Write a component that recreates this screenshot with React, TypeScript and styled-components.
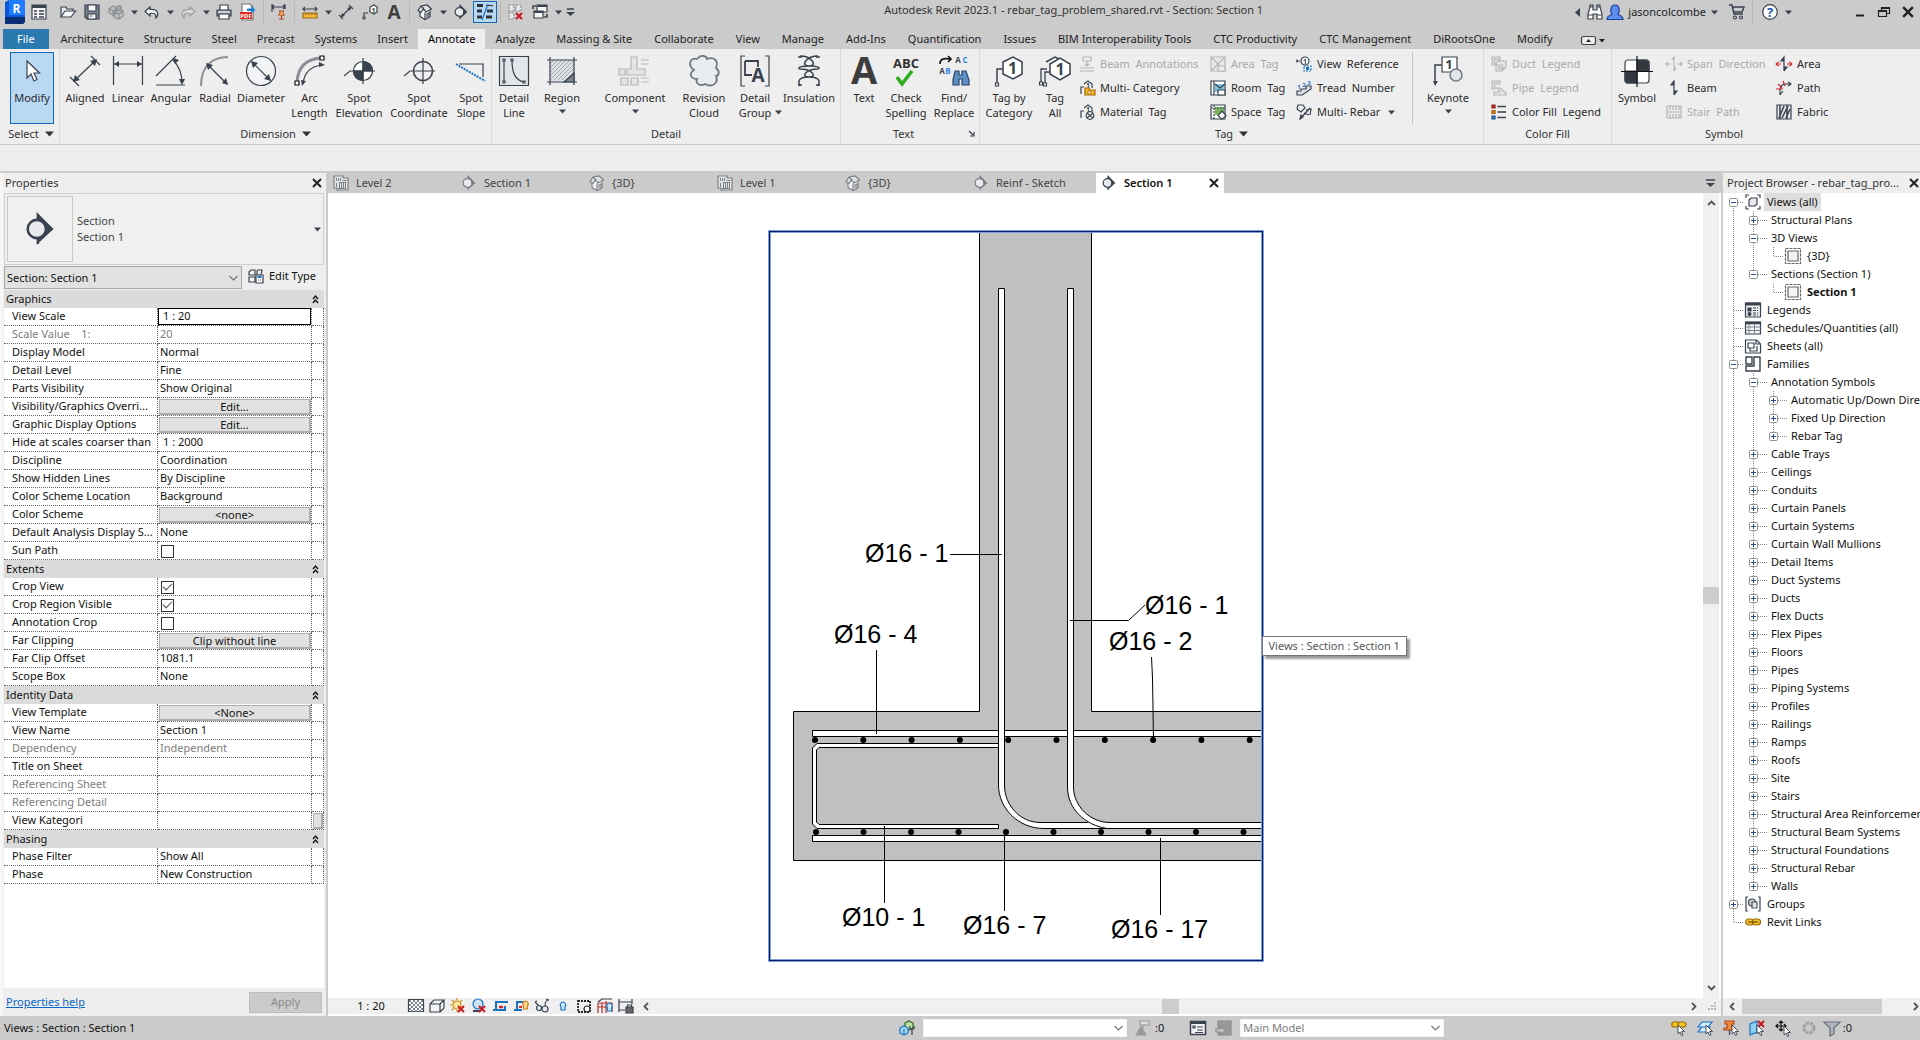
import React from "react";
import styled, { createGlobalStyle, css } from "styled-components";

const ink = "#39424e";
const mute = "#b4b6b8";
const blue = "#1a74c4";
const chrome = "#cbcbcb";
const panel = "#eeeeee";

const Global = createGlobalStyle`
  *, *::before, *::after { box-sizing: border-box; }
  html, body, #root { height: 100%; }
  body {
    margin: 0;
    overflow: hidden;
    background: ${panel};
    color: #1e1e1e;
    font: 11px/16px "Noto Sans", "Open Sans", sans-serif;
  }
  button, input, select { font: inherit; color: inherit; }
  svg { overflow: visible; flex: none; }
`;

/* ---------- icons ---------- */

type GProps = { w?: number; h?: number; vw?: number; vh?: number; color?: string; children: React.ReactNode };
const G = ({ w = 16, h = 16, vw, vh, color = ink, children }: GProps) => (
  <svg width={w} height={h} viewBox={`0 0 ${vw ?? w} ${vh ?? h}`} fill="none" stroke={color} strokeWidth={1.2} aria-hidden="true">
    {children}
  </svg>
);

const T = ({ x, y, s, c = ink, children }: { x: number; y: number; s: number; c?: string; children: string }) => (
  <text x={x} y={y} fontSize={s} fontWeight={700} fontFamily="Open Sans, sans-serif" fill={c} stroke="none" textAnchor="middle">{children}</text>
);

const Caret = () => <G w={7} h={5}><path d="M0 .5h7L3.500 4.500z" fill={ink} stroke="none" /></G>;
const BigCaret = () => <G w={9} h={6}><path d="M0 .5h9L4.500 5.500z" fill="#333" stroke="none" /></G>;
const Cross = ({ s = 10 }: { s?: number }) => <G w={s} h={s} vw={10} vh={10} color="#222"><path d="M1 1l8 8M9 1L1 9" strokeWidth={2} /></G>;
const Chevron = ({ turn, c = "#555" }: { turn: number; c?: string }) => (
  <G w={9} h={9} color={c}><path d="M1 3l3.500 3.500L8 3" strokeWidth={1.8} transform={`rotate(${turn} 4.500 4.500)`} /></G>
);
const Thin = () => <G w={9} h={6} color="#777"><path d="M.5 1l4 4 4-4" /></G>;

const cursor = (x: number, y: number) => (
  <path d={`M${x} ${y}v9l2-2 1.500 3.500 1.500-.7-1.500-3.300h3z`} fill="#fff" stroke={ink} strokeWidth={0.9} />
);
const redX = (x: number, y: number) => <path d={`M${x} ${y}l6 6m0-6l-6 6`} stroke="#c8191e" strokeWidth={2} />;

const House = ({ c = ink }: { c?: string }) => (
  <G color={c}>
    <path d="M3 7.500v5l5 3 5-2.500V6.500" fill="#f4f5f6" />
    <path d="M1 6.500L4 2l6-1 4.500 4-5.500 3-2.500-3.500L4 8.500z" fill="#dfe2e5" />
    <path d="M8 8.500v7M10 13.500v-3.500l2-1v4M4 2l2.500 2.500" />
  </G>
);
const SectionIcon = ({ c = ink, s = 16 }: { c?: string; s?: number }) => (
  <G w={s} h={s} vw={16} vh={16} color={c}><path d="M7 1v14M7 1.500L13.500 8 7 14z" fill={c} /><circle cx={6.500} cy={8} r={4.300} fill="#e8eaee" /></G>
);
const PlanIcon = ({ c = ink }: { c?: string }) => (
  <G color={c}><path d="M1 1h9v2h5v12H4v-2H1z" fill="#e4e5e7" /><path d="M3.500 3v3M5.500 3v3M7.500 3v3M3.500 8v4M6 7.500h7M6.500 8v5M8.500 8v5M10.500 8v5M12.500 8v5M5 13.500h8M9.500 5.500h4" strokeWidth={1} /></G>
);
const Binoculars = () => (
  <G><path d="M3 3h3v3h4V3h3l2 7v5h-5v-5H6v5H1v-5z" fill="#fff" /><path d="M3 3V1h3v2M10 3V1h3v2M1 11h5M10 11h5" /></G>
);

const DimIcon = <G><path d="M3 13L13 3M1 11l4 4M11 1l4 4" /><path d="M3 13l1-4 3 3zM13 3l-1 4-3-3z" fill={ink} stroke="none" /></G>;

const quick: Record<string, React.ReactNode> = {
  revit: <G w={20} h={24}><path d="M0 2l4-2h16v22l-2 2H0z" fill="#0a57d8" stroke="none" /><path d="M4 0h16v15H4z" fill="#1f7cff" stroke="none" /><path d="M0 17h20v5l-2 2H0z" fill="#0b2f77" stroke="none" /><T x={11.500} y={13} s={12} c="#fff">R</T></G>,
  props: <G><path d="M1 1h14v14H1z" fill="#f4f4f4" /><path d="M1 2.500h14" strokeWidth={3} /><path d="M3 7h3M3 10h3M3 13h3M8 7h5M8 10h5M8 13h5" strokeWidth={1.600} /></G>,
  open: <G><path d="M1 13V3h5l1 2h6v2" fill="#e4e7ea" /><path d="M1 13l4-6h10.500L11 13z" fill="#f6f7f8" /></G>,
  save: <G><path d="M1 1h14v14H3l-2-2z" fill="#7b8591" /><path d="M4 1h8v6H4zM4 10h8v5H4z" fill="#f4f4f4" /><path d="M6 12h2" /></G>,
  sync: <G color="#8b8f94"><path d="M1 5l4-3 4 2v5l-4 2-4-2zM6 8l4-3 5 2v5l-4 3-5-2z" fill="#bfc2c5" /><path d="M1 5l4 2v4M5 7l4-3M6 8l5 2v5M11 10l4-3" /><circle cx={11} cy={4} r={2.500} fill="#aaa" /></G>,
  undo: <G><path d="M6 3L1 7.500 6 12V9.500c5-1 7 1 5.500 5 4.500-5 2-9.500-5.500-9z" fill="#f7f7f7" /></G>,
  redo: <G color="#9b9ea2"><path d="M10 3l5 4.500-5 4.500V9.500c-5-1-7 1-5.500 5-4.500-5-2-9.500 5.500-9z" fill="#d8d8d8" /></G>,
  print: <G><path d="M4 6V1h8v5" fill="#fff" /><path d="M1 6h14v6H1z" fill="#8a929b" /><path d="M3 10h10v5H3z" fill="#fff" /><path d="M2 8h12" stroke="#fff" /></G>,
  pdf: <G><path d="M2 0h8l3 3v13H2z" fill="#fff" stroke="#777" /><path d="M0 8h12v7H0z" fill="#e02b20" stroke="none" /><T x={6} y={14} s={6} c="#fff">PDF</T><path d="M7 4.500h4V2l4.500 4L11 9.500V7H7z" fill="#1b82d8" stroke="none" /></G>,
  pin: <G><path d="M1 0v8M14 0v5M1 3h13M3 1L1 3l2 2M12 1l2 2-2 2" /><path d="M8 7h5M9 7v4M12 7v4M7 11h7M10.500 11v4M8 15h5" stroke="#b3441a" /><path d="M9 8h3v3H9z" fill="#f0a040" stroke="none" /></G>,
  measure: <G><path d="M1 5h14M3 3L1 5l2 2M13 3l2 2-2 2" /><path d="M1 9h14v5H1z" fill="#f2b63a" stroke="#9b6a12" /><path d="M4 9v2M7 9v2M10 9v2M13 9v2" stroke="#9b6a12" /></G>,
  align: DimIcon,
  tag: <G><path d="M2 14V9h4" /><path d="M8 3l4-2 3 2v5l-3 2-4-2z" fill="#fff" /><circle cx={2} cy={14} r={1.200} fill="#fff" /><T x={11.500} y={8.500} s={7}>1</T></G>,
  text: <G w={18} h={18}><T x={9} y={16} s={19} c="#3d3d3d">A</T></G>,
  house: <House />,
  section: <SectionIcon />,
  thin: <G w={18} h={18}><path d="M1 2.500h6M1 8h5M1 14h5M11 8h6M10 14h6" strokeWidth={3} stroke="#2b3440" /><path d="M10 2.500h7" /><path d="M12 1L6 17" stroke={blue} /></G>,
  closeh: <G><path d="M1 1h5v6H1zM8 1h5v6H8zM1 9h5v6H1z" fill="#e8e8e8" stroke="#8a8f96" strokeDasharray="2 1" />{redX(8, 9)}</G>,
  switchw: <G><path d="M5 1h10v7H5zM2 7h9v7H2z" fill="#f4f4f4" /><path d="M5 2h10M2 8h9" strokeWidth={2} /><path d="M1 5V2h3M15 10v3h-3" stroke="#111" /></G>,
};

const big: Record<string, React.ReactNode> = {
  modify: <G w={16} h={24}><path d="M3 2v17l4-4 3 7 3-1.500-3-6.500h5.500z" fill="#fff" /></G>,
  aligned: <G w={32} h={32}><path d="M5 26L26 6M1 22l9 9M22 1l9 9" /><path d="M4 27l2-7 5 5zM28 4l-2 7-5-5z" fill={ink} stroke="none" /></G>,
  linear: <G w={32} h={32}><path d="M1.500 1v29M30.500 1v29M2 9h28" /><path d="M2 9l5-3v6zM30 9l-5-3v6z" fill={ink} stroke="none" /></G>,
  angular: <G w={32} h={32}><path d="M1 30h29M1 21L21 1M18 5c6 6 9 13 9 23" /><path d="M18 3l6 2-4 4zM27 30l-3-6h6z" fill={ink} stroke="none" /></G>,
  radial: <G w={32} h={32}><path d="M2 31C2 12 12 2 29 2" stroke="#8a8f96" strokeWidth={2} /><path d="M8 9l20 20" /><path d="M7 8l7 2-5 5zM29 30l-6-2 4-5z" fill={ink} stroke="none" /></G>,
  diameter: <G w={32} h={32}><circle cx={16} cy={16} r={14.500} fill="#f3f4f5" /><path d="M7 7l18 18" /><path d="M6 6l7 2-5 5zM26 26l-7-2 5-5z" fill={ink} stroke="none" /></G>,
  arc: <G w={32} h={32}><path d="M3 27C4 12 12 4 27 3" stroke="#8a8f96" strokeWidth={3} /><path d="M9 29C10 18 17 11 29 10" /><path d="M8 31l-1-6 5 1zM31 10l-6-3v5z" fill={ink} stroke="none" /><path d="M1 26h4v4H1zM26 1h4v4h-4z" fill="#fff" stroke="#111" /></G>,
  elevation: <G w={32} h={32}><circle cx={20} cy={16} r={9.500} fill="#fff" /><path d="M20 6.500A9.500 9.500 0 0 1 29.500 16H20zM20 25.500A9.500 9.500 0 0 1 10.500 16H20z" fill={ink} /><path d="M20 3v26M1 21l6-5h25" /></G>,
  coordinate: <G w={32} h={32}><circle cx={20} cy={16} r={9.500} strokeWidth={1.600} /><path d="M20 3v26M1 21l6-5h25" /></G>,
  slope: <G w={32} h={32}><path d="M4 9h24v13" /><path d="M1 9l29 17" stroke={blue} strokeWidth={2} strokeDasharray="2 1" /></G>,
  detailline: <G w={32} h={32}><path d="M1.500 1.500h29v29h-29z" fill="#e2e5e9" /><path d="M6 5v22M14 5c0 13 3 20 12 22" /><path d="M5 4h2v2H5zM13 4h2v2h-2zM5 26h2v2H5zM25 26h2v2h-2z" fill="#fff" /></G>,
  region: <G w={32} h={32}><path d="M4 5h24v22H4z" fill="#dfe1e4" stroke="none" /><path d="M4 9l4-4M4 13l8-8M4 17L16 5M4 21L20 5M4 25L24 5M8 25L28 5M12 25L28 9M16 25l12-12M20 25l8-8M24 25l4-4" stroke="#9a9fa6" strokeWidth={0.900} /><path d="M1 5h30M4 2v28M28 2v28M1 27h30" /><path d="M18 27l10-9v9z" fill="#7b838e" /></G>,
  component: <G w={36} h={32} color={mute}><path d="M14 2h6v12h8v6H10v-6h4z" fill="#e4e4e4" /><path d="M2 14h6v6H2zM4 23h7v7H4zM14 23h7v7h-7zM24 23h8M24 27h8M24 5h8M24 9h8" fill="#e4e4e4" /></G>,
  cloud: <G w={32} h={32}><path d="M6 15C0 11 1 2 9 4c4-5 10-3 10 0 7-3 12 2 9 9 5 4 2 8 0 8 3 7-4 12-11 8-5 3-10-1-8-5-7 0-8-6-3-9z" fill="#e9ecef" stroke="#717983" strokeWidth={1.800} /></G>,
  group: <G w={32} h={32}><path d="M6 1H2v30h4M26 1h4v30h-4" /><path d="M6 6h13v6M6 6v14h7" strokeWidth={1.800} /><T x={19} y={27} s={19} c="#39424e">A</T></G>,
  insulation: <G w={26} h={32}><path d="M4 1c12 0 18 10 9 10S1 13 4 14c12 0 18 8 9 8S1 25 4 31M22 1C10 1 4 11 13 11s12 2 9 3C10 14 4 22 13 22s12 3 9 9M2 2h4M20 2h4M2 30h4M20 30h4" strokeWidth={1.500} /></G>,
  text: <G w={28} h={32}><T x={14} y={29} s={38} c="#3d3d3d">A</T></G>,
  spelling: <G w={30} h={32}><T x={15} y={13} s={13} c="#333">ABC</T><path d="M6 22l5 7L21 16" stroke="#2fae1e" strokeWidth={3.500} /></G>,
  find: <G w={32} h={32}><path d="M2 9c0-5 3-6 10-5M10 1l3 3-3 3" stroke="#111" strokeWidth={1.600} /><T x={20} y={8} s={8}>A</T><T x={27} y={8} s={8} c="#2e86de">C</T><T x={4} y={19} s={8}>A</T><T x={10} y={19} s={8} c="#2e86de">B</T><path d="M17 16h4v4h3v-4h4l3 9v5h-7v-6h-3v6h-6v-5z" fill="#5f8fc0" stroke="#24466b" /></G>,
  tagby: <G w={32} h={32}><path d="M4 29V14h6" strokeWidth={1.500} /><path d="M10 7l10-5 9 5v12l-9 5-10-5z" fill="#fff" strokeWidth={1.500} /><path d="M2.500 28h3v3h-3z" fill="#fff" /><T x={19.500} y={19} s={16}>1</T></G>,
  tagall: <G w={34} h={32}><path d="M3 29V14h6M7 29V17h5" strokeWidth={1.300} /><path d="M8 7l9-5 4 2M12 9l10-6 10 6v10l-10 6-10-6z" fill="#fff" strokeWidth={1.500} /><path d="M1.500 27h3v3h-3zM5.500 28h3v3h-3z" fill="#fff" /><T x={22} y={20} s={16}>1</T></G>,
  keynote: <G w={30} h={32}><path d="M2 28V10h7" strokeWidth={1.500} /><path d="M9 2h15v15H9z" fill="#fff" /><circle cx={23} cy={20} r={6} fill="#e2e5e9" stroke="#717983" strokeWidth={1.500} /><path d="M2 31l-2-5h5z" fill={ink} stroke="none" /><T x={16} y={14} s={13}>1</T></G>,
  symbol: <G w={32} h={32}><rect x={4} y={5} width={24} height={23} rx={3} fill="#fff" /><path d="M16 5h9q3 0 3 3v8H16zM16 28H7q-3 0-3-3v-9h12z" fill="#33393f" /><path d="M16 1v31M0 16.500h32" stroke="#111" /></G>,
};

const small: Record<string, React.ReactNode> = {
  beamann: <G color={mute}><path d="M4 1h8v4H4zM8 5v5M6 8l2 2 2-2M1 12h14M1 15h14" /></G>,
  multicat: <G><path d="M2 14V7h3" /><path d="M5 4l4-3 4 3v4" fill="#fff" /><T x={9} y={8} s={7}>1</T><path d="M6 8h4l1 2h5v5H6z" fill="#f5b731" stroke="#a46a00" /><path d="M9 11h3v3H9z" fill="#fff0b0" stroke="#a46a00" strokeWidth={0.800} /></G>,
  material: <G><path d="M2 14V7h3" /><path d="M5 4l4-3 4 3v4" fill="#fff" /><T x={9} y={8} s={7}>1</T><circle cx={11} cy={11.500} r={3.800} fill="#fff" /><path d="M8 9l6 5M14 9l-6 5" /></G>,
  areatag: <G color={mute}><path d="M1 1h14v14H1zM1 1l14 14M15 1L1 15" fill="#e8e8e8" /><path d="M8 10h7v5H8z" fill="#eee" /></G>,
  roomtag: <G><path d="M1 1h14v14H1zM4 1v14" fill="#fff" /><path d="M5 4h9v8H5z" fill="#7fc0e0" stroke="none" /><path d="M5 4l5 4 5-4" /><path d="M8 10h7v5H8z" fill="#fff" /></G>,
  spacetag: <G><path d="M1 1h14v14H1z" fill="#fff" /><path d="M5 3h9v8H5z" fill="#7cb860" stroke="none" /><path d="M4 1v14M1 4h14" strokeDasharray="2 1" /><path d="M12 7l4 4.500-4 4-4-4z" fill="#fff" /></G>,
  viewref: <G><circle cx={9} cy={5} r={4} fill="#fff" /><path d="M0 5h4M1 3.500v3" /><T x={9} y={8} s={7}>1</T><path d="M8 10h7v5H8z" stroke={blue} strokeDasharray="2 1" /><path d="M10 11h3v3h-3z" fill={blue} stroke="none" /></G>,
  tread: <G><path d="M1 11h4V9h5V6h5v3l-9 6H1z" fill="#dfe3e6" /><T x={3} y={9} s={6} c={blue}>1</T><T x={8} y={7} s={6} c={blue}>2</T><T x={13} y={5} s={6} c={blue}>3</T></G>,
  multirebar: <G><path d="M2 1h5l2 3-4 4-4-3zM4 15L14 4M8 9l5 2M10 6l5-1-1 6" fill="none" /><path d="M4 15l1-4 2 2z" fill={ink} /></G>,
  duct: <G color={mute}><path d="M1 1h3v3H1zM6 1h3v3H6zM1 6h3v3H1zM5 7l3-2h7v6l-4 4H5zM5 9h7M8 11h4v2H8z" fill="#e6e6e6" /></G>,
  pipe: <G color={mute}><path d="M1 1h3v3H1zM6 1h3v3H6zM1 6h3v3H1zM6 8h3l6 5v2H3v-3h6z" fill="#e6e6e6" /></G>,
  colorfill: <G><path d="M6.500 2.500H15M6.500 8H15M6.500 13.500H15" strokeWidth={1.500} /><path d="M1 1h3v3H1z" fill="#d22" stroke="#822" /><path d="M1 6.500h3v3H1z" fill="#f28c1e" stroke="#a55a00" /><path d="M1 12h3v3H1z" fill="#3c8ed8" stroke="#14508c" /></G>,
  span: <G color={mute}><path d="M8 1v14M6 4l2-3v14l2-4M0 8h5M11 8h5M2 6L0 8l2 2M14 6l2 2-2 2" /></G>,
  beam: <G><path d="M8 15V1L5 5h3M8 15l3-4H8" fill={ink} /></G>,
  stair: <G color={mute}><path d="M1 2h14v12H1zM1 8h14M4 2v4M7 2v4M10 2v4M13 2v4M4 10v4M7 10v4M10 10v4M13 10v4" /></G>,
  area: <G><path d="M8 15V1L5 5h3M8 15l3-4H8" fill={ink} /><path d="M0 8h5M11 8h5M3 6q-6 2 0 4M13 6q6 2 0 4" stroke="#d8202a" /></G>,
  path: <G><path d="M4 15V9q1-5 6-5h4M12 2l3 2-3 2M4 15l3-4" /><path d="M0 9h7M7 1l2 5M2 4l4 4" stroke="#d8202a" /></G>,
  fabric: <G><path d="M1 1h14v14H1z" fill="#e3e6e9" /><path d="M4 1v14M11 1v14M3 14L8 2M6 14l6-12M10 14l4-9" strokeWidth={1.500} /></G>,
};

const treeIcons: Record<string, React.ReactNode> = {
  views: <G><path d="M1 4V1h3M12 1h3v3M15 12v3h-3M4 15H1v-3" /><path d="M4 6l2-2h6v6l-2 2H4z" fill="#e8e8ee" /></G>,
  sheetview: <G color="#666"><path d="M.5.5h15v15H.500z" strokeDasharray="3 1" /><path d="M3 3h10v10H3z" fill="#f3f3f3" /></G>,
  legends: <G><path d="M.5 1h15v14H.5z" fill="#eef0f2" /><path d="M.5 2h15" strokeWidth={3} /><path d="M3 6h3v3H3z" fill={ink} /><circle cx={4.500} cy={12} r={1.500} fill={ink} /><path d="M8 6h5M8 8.500h5M8 11h5M8 13h5" strokeDasharray="3 1" /></G>,
  schedules: <G><path d="M.5 2h15v12H.5z" fill="#f5f5f5" /><path d="M.5 3h15" strokeWidth={2.500} /><path d="M.5 7h15M.5 10.500h15M4 4v10M9.500 4v10" stroke="#7b838c" strokeWidth={1} /></G>,
  sheets: <G><path d="M.5 2h11l4 4v9H.500z" fill="#fff" /><path d="M3 5h6v5H3zM5 10v3h7V8M11 2v4h4" /></G>,
  families: <G><path d="M1 1h6v7H1zM9 1h6v14H1v-5h8z" fill="#fff" strokeWidth={1.400} /></G>,
  groups: <G><path d="M3 1H1v14h2M13 1h2v14h-2" /><circle cx={7} cy={6.500} r={3.500} fill="#d4d7da" /><path d="M7 6h5v6H7z" fill="#eceef0" opacity={0.900} /></G>,
  links: <G color="#9a6b00"><rect x={0.700} y={5} width={8} height={6} rx={3} fill="#f3c32f" /><rect x={7.500} y={5} width={8} height={6} rx={3} fill="#f3c32f" /><path d="M3 8h10" stroke="#6d4b00" /></G>,
};

const sun = <><circle cx={7} cy={7} r={4} fill="#ffe9a0" stroke="#c98a12" /><path d="M7 0v2M7 12v2M0 7h2M2 2l1.500 1.500M12 2l-1.500 1.500M2 12l1.500-1.500" stroke="#c98a12" /></>;
const bulb = (x: number, y: number, f: string, s: string) => <path d={`M${x} ${y}a3 3 0 0 1 2 5v3h-4v-3a3 3 0 0 1 2-5z`} fill={f} stroke={s} />;

const checks = Array.from({ length: 7 * 6 }, (_, i) => i).filter((i) => ((i % 7) + Math.floor(i / 7)) % 2 === 0);

const viewIcons: [string, React.ReactNode][] = [
  ["Detail Level", <G><path d="M.5 1.500h15v12H.500z" fill="#fff" />{checks.map((i) => <rect key={i} x={1 + (i % 7) * 2} y={2 + Math.floor(i / 7) * 2} width={2} height={2} fill="#7a828b" stroke="none" />)}</G>],
  ["Visual Style", <G><path d="M1 6h10v8H1zM1 6l4-4h10L11 6M15 2v8l-4 4" fill="#f4f4f4" /></G>],
  ["Sun Path", <G>{sun}{redX(8, 8)}</G>],
  ["Shadows", <G><circle cx={7} cy={6} r={5} fill="#c9e4f6" stroke={blue} /><path d="M2 13h7" strokeWidth={2} />{redX(8, 8)}</G>],
  ["Crop View", <G><path d="M4 13V4h12M1 12h12V8" stroke={blue} strokeWidth={2} /><path d="M7 9h4" stroke="#d22" strokeWidth={2.500} /></G>],
  ["Show Crop Region", <G><path d="M4 13V4h8M1 12h8" stroke={blue} strokeWidth={2} /><path d="M6 9h3" stroke="#d22" strokeWidth={2} />{bulb(12.500, 3, "#ffd98a", "#d07c14")}</G>],
  ["Temporary Hide/Isolate", <G><path d="M1 4l4 4M15 2q-4 0-4 6M7 10l2 1M1 4l2-1M12 1l3 1" /><circle cx={5} cy={10} r={2.500} fill="#e6eef4" /><circle cx={11} cy={11} r={3} fill="#e6eef4" /></G>],
  ["Reveal Hidden Elements", <G>{bulb(8, 4, "#cfe9fb", blue)}</G>],
  ["Temporary View Properties", <G><path d="M2 3h12v11H2z" strokeDasharray="2 1" strokeWidth={1.800} stroke="#222" /><circle cx={11} cy={11} r={3} fill="#fff" stroke="#222" /></G>],
  ["Analytical Model", <G><path d="M1 5h14v9M1 5v10M5 5v10M9 3v12M1 9h12" stroke="#b03030" /><path d="M1 4l4-3h10" />{bulb(12.500, 5, "#cfe9fb", blue)}</G>],
  ["Reveal Constraints", <G><path d="M1 1v13M14 1v5M1 4h13" /><path d="M8 9h7v6H8z" fill="#666" /><path d="M9.500 9V7h4v2M1 12h6" /></G>],
];

const statusIcons: [string, React.ReactNode][] = [
  ["Select links", <G><rect x={0.700} y={2} width={8} height={5} rx={2.500} fill="#f3c32f" stroke="#9a6b00" /><rect x={7} y={2} width={8} height={5} rx={2.500} fill="#f3c32f" stroke="#9a6b00" />{cursor(7, 5)}</G>],
  ["Select underlay elements", <G><path d="M5 2h10l-4 5H1zM5 7h8l-2 5H1z" fill="#d5eafb" stroke={blue} />{cursor(9, 5)}</G>],
  ["Select pinned elements", <G><path d="M2 1h9v3H9v4h3v2H1V8h3V4H2z" fill="#f08a3c" stroke="#b3441a" /><path d="M6.500 10v5" />{cursor(9, 5)}</G>],
  ["Select elements by face", <G><path d="M1 4l7-3v11l-7 3z" fill="#8fd0f2" stroke={blue} />{redX(9, 1)}{cursor(8, 5)}</G>],
  ["Drag elements on selection", <G><path d="M6 1v10M1 6h10M4 3l2-2 2 2M4 9l2 2 2-2M3 4L1 6l2 2M9 4l2 2-2 2" stroke="#111" />{cursor(9, 6)}</G>],
  ["Background processes", <G><circle cx={8} cy={8} r={5} stroke="#a0a0a0" strokeWidth={3} strokeDasharray="3 1" /></G>],
];

/* ---------- shared parts ---------- */

const row = css`display: flex; align-items: center;`;
const bare = css`
  ${row}
  justify-content: center;
  padding: 0;
  border: 0;
  background: none;
  flex: none;
`;
const Shell = styled.div`display: flex; flex-direction: column; height: 100vh; min-width: 0;`;
const IconButton = styled.button<{ $w?: number; $on?: boolean }>`
  ${bare}
  width: ${(p) => p.$w ?? 24}px;
  height: 22px;
  ${(p) => p.$on && css`background: #b7d7f3; border: 1px solid #1468b8;`}
`;
const Spacer = styled.span<{ $w: number }>`flex: none; width: ${(p) => p.$w}px;`;
const Divider = styled.span`
  flex: none; align-self: stretch; width: 7px;
  background: linear-gradient(#b9b9b9, #b9b9b9) center / 1px 100% no-repeat;
`;

/* ---------- title bar ---------- */

const TitleBar = styled.header`
  display: flex; height: 29px; padding: 1px 0 6px 3px; background: ${chrome}; flex: none;
`;
const Tools = styled.div`${row} flex: none;`;
const Title = styled.h1`
  flex: 1; margin: 0; text-align: center; white-space: nowrap; overflow: hidden;
  font-size: 11px; font-weight: 400; line-height: 18px; color: #333;
`;
const User = styled.button`${bare} gap: 5px; height: 22px; color: #222;`;

const quickItems: (string | number)[] = [
  "revit", "props", 5, "open", "save", "sync", "v", "undo", "v", "redo", "v", "print", "pdf", "|", "pin", "|",
  "measure", "v", "align", "tag", "text", "|", "house", "v", "section", "thin", "|", "closeh", "switchw", "v",
];

/* ---------- ribbon ---------- */

const Tabs = styled.nav`display: flex; height: 20px; padding-left: 3px; background: ${chrome}; flex: none;`;
const Tab = styled.button<{ $kind?: "file" | "active" | "wide" }>`
  border: 0; padding: 0 10px; height: 20px; line-height: 20px; white-space: nowrap; background: none; color: #222; flex: none;
  ${(p) => p.$kind === "file" && css`background: #2a7ab0; color: #fff; padding: 0 14px; margin-right: 2px;`}
  ${(p) => p.$kind === "active" && css`background: ${panel}; color: #000;`}
  ${(p) => p.$kind === "wide" && css`padding: 0 11px;`}
`;
const coreTabs = ["Architecture", "Structure", "Steel", "Precast", "Systems", "Insert", "Annotate", "Analyze"];
const moreTabs = ["Massing & Site", "Collaborate", "View", "Manage", "Add-Ins", "Quantification", "Issues", "BIM Interoperability Tools", "CTC Productivity", "CTC Management", "DiRootsOne", "Modify"];

const Ribbon = styled.section`
  display: flex; height: 96px; padding: 0 0 0 3px; background: ${panel}; border-bottom: 1px solid ${chrome}; flex: none;
`;
const Group = styled.section<{ $w: number; $last?: boolean }>`
  display: flex; flex-direction: column; flex: none; width: ${(p) => p.$w}px; padding-top: 3px;
  border-right: ${(p) => (p.$last ? 0 : 1)}px solid #d9d9d9;
`;
const GroupBody = styled.div<{ $pad?: number }>`display: flex; height: 72px; padding-left: ${(p) => p.$pad ?? 0}px;`;
const GroupTitle = styled.h2`
  ${row} justify-content: center; gap: 6px; margin: 2px 0 0; height: 16px; font-size: 11px; font-weight: 400; color: #333;
`;
const Launcher = styled.button`${bare} margin-left: auto; width: 14px; height: 14px;`;
const BigButton = styled.button<{ $w: number; $on?: boolean }>`
  display: flex; flex-direction: column; align-items: center; flex: none;
  width: ${(p) => p.$w}px; height: 72px; padding: 3px 0 0; border: 0; background: none;
  line-height: 15px; white-space: nowrap; color: #2b2b2b;
  ${(p) => p.$on && css`background: #b9d8f4; border: 1px solid #1468b8; padding-top: 2px; margin-left: 7px;`}
`;
const BigArt = styled.span`${row} justify-content: center; height: 32px; margin-bottom: 3px;`;
const Beside = styled.span`${row} gap: 4px; margin-right: -11px;`;
const BelowCaret = styled.span`display: flex; padding-top: 4px;`;
const Stack = styled.div<{ $w: number }>`display: flex; flex-direction: column; flex: none; width: ${(p) => p.$w}px;`;
const SmallButton = styled.button<{ $off?: boolean }>`
  ${row} gap: 5px; height: 24px; padding: 0; border: 0; background: none; white-space: pre; color: ${(p) => (p.$off ? "#a9a9a9" : "#2b2b2b")};
`;
const Rule = styled.span`width: 1px; height: 72px; background: #c4c4c4; margin-left: auto;`;
const OptionsBar = styled.div`height: 28px; background: ${panel}; border-bottom: 2px solid ${chrome}; flex: none;`;

type B = [string, string, number, ("menu" | "beside")?];
const Big = ({ items }: { items: B[] }) => (
  <>
    {items.map(([icon, label, w, mode]) => {
      const lines = label.split("|");
      return (
        <BigButton key={label} $w={w} type="button">
          <BigArt>{big[icon]}</BigArt>
          {mode === "beside" ? (
            <><span>{lines[0]}</span><Beside><span>{lines[1]}</span><Caret /></Beside></>
          ) : (
            lines.map((l) => <span key={l}>{l}</span>)
          )}
          {mode === "menu" && <BelowCaret><Caret /></BelowCaret>}
        </BigButton>
      );
    })}
  </>
);

type S = [string, string, ("off" | "menu")?];
const Smalls = ({ w, items }: { w: number; items: S[] }) => (
  <Stack $w={w}>
    {items.map(([icon, label, mode]) => (
      <SmallButton key={label} type="button" $off={mode === "off"} disabled={mode === "off"}>
        {small[icon]}<span>{label}</span>{mode === "menu" && <Caret />}
      </SmallButton>
    ))}
  </Stack>
);

/* ---------- workspace ---------- */

const Work = styled.main`
  flex: 1; min-height: 0; display: grid; grid-template-columns: 323px minmax(0, 1fr) 197px;
  border-left: 3px solid #f6f6f6; background: ${panel};
`;
const Panel = styled.section`display: flex; flex-direction: column; min-width: 0; min-height: 0; background: ${panel};`;
const PanelHead = styled.div<{ $pad?: number }>`
  ${row} justify-content: space-between; height: 20px; padding: 0 0 0 ${(p) => p.$pad ?? 2}px; flex: none;
`;
const PanelName = styled.h2`margin: 0; font-size: 11px; font-weight: 400; color: #333; white-space: nowrap;`;
const Close = styled.button<{ $w?: number }>`${bare} width: ${(p) => p.$w ?? 18}px; height: 18px;`;

const TypeCard = styled.div`
  ${row} height: 72px; margin: 0 2px 0 1px; padding: 2px; border: 1px solid #d0d0d0; background: #f0f0f0; flex: none;
`;
const Preview = styled.div`${row} justify-content: center; width: 66px; height: 66px; border: 1px solid #c8c8c8;`;
const TypeName = styled.div`flex: 1; padding-left: 4px; color: #444;`;
const TypeRow = styled.div`${row} height: 25px; padding: 1px 0 1px 1px; flex: none;`;
const Combo = styled.span<{ $w: number; $h: number; $plain?: boolean }>`
  display: grid; grid-template-columns: 1fr 16px; align-items: center; width: ${(p) => p.$w}px; height: ${(p) => p.$h}px; flex: none;
  background: ${(p) => (p.$plain ? "#fff" : "#e1e1e1")}; border: 1px solid ${(p) => (p.$plain ? "#f4f4f4" : "#a8a8a8")};
  svg { pointer-events: none; grid-area: 1 / 2; justify-self: center; }
`;
const Select = styled.select<{ $dim?: boolean }>`
  grid-area: 1 / 1 / 2 / 3; appearance: none; border: 0; background: none; padding: 0 2px; height: 100%; color: ${(p) => (p.$dim ? "#7c7c7c" : "#111")};
`;
const EditType = styled.button`${bare} align-self: flex-start; height: 20px; gap: 5px; margin-left: 6px; color: #111; white-space: nowrap;`;

const Scroll = styled.div`flex: 1; min-height: 0; margin: 0 2px 0 1px; background: #fff; overflow: hidden;`;
const Table = styled.table`
  width: 100%; border-collapse: separate; border-spacing: 0; table-layout: fixed; color: #111;
  th, td { padding: 0; height: 18px; font-weight: 400; text-align: left; white-space: nowrap; overflow: hidden; }
`;
const NameCol = styled.col`width: 154px;`;
const EdgeCol = styled.col`width: 12px;`;
const SectionCell = styled.th`background: #dbdbdb;`;
const SectionBar = styled.div`${row} justify-content: space-between; height: 18px; padding: 0 5px 0 2px;`;
const Dot = css`border-bottom: 1px dotted #666; border-right: 1px dotted #666;`;
const NameCell = styled.th<{ $dim?: boolean }>`
  ${Dot} color: ${(p) => (p.$dim ? "#7d7d7d" : "#111")};
  label { display: block; height: 17px; line-height: 15px; padding-left: 8px; white-space: pre; }
`;
const ValueCell = styled.td`${Dot}`;
const ValueInput = styled.input<{ $focus?: boolean; $inset?: boolean }>`
  display: block; width: 100%; height: 17px; line-height: 15px; outline: 0; background: #fff;
  padding: 0 0 2px ${(p) => (p.$focus ? 4 : p.$inset ? 5 : 2)}px; border: ${(p) => (p.$focus ? "1px solid #000" : "0")};
  &:disabled { color: #7d7d7d; }
`;
const ValueButton = styled.button`
  display: block; width: calc(100% - 1px); height: 16px; line-height: 14px; margin: 1px 0 0 1px; padding: 0;
  background: #e1e1e1; border: 1px solid #adadad; border-bottom-width: 2px; border-right-width: 2px;
`;
const Check = styled.input`
  appearance: none; display: block; width: 13px; height: 13px; margin: 2px 0 0 3px; border: 1px solid #333; background: #fff;
  &:checked::after { content: ""; display: block; width: 9px; height: 5px; margin: 1px; border: solid #444; border-width: 0 0 1px 1px; transform: rotate(-45deg); }
`;
const Footer = styled.div`${row} justify-content: space-between; height: 28px; padding: 0 4px 0 3px; flex: none;`;
const Help = styled.a`color: #0a66c8; text-decoration: underline;`;
const Apply = styled.button`width: 73px; height: 21px; padding: 0; background: ${chrome}; border: 1px solid #bdbdbd; color: #8a8a8a;`;

type P = [string, string, ("input" | "focus" | "inset" | "dim" | "button" | "off" | "on" | "extra")];
const props: [string, P[]][] = [
  ["Graphics", [
    ["View Scale", "1 : 20", "focus"], ["Scale Value    1:", "20", "dim"], ["Display Model", "Normal", "input"], ["Detail Level", "Fine", "input"],
    ["Parts Visibility", "Show Original", "input"], ["Visibility/Graphics Overri...", "Edit...", "button"], ["Graphic Display Options", "Edit...", "button"],
    ["Hide at scales coarser than", "1 : 2000", "inset"], ["Discipline", "Coordination", "input"], ["Show Hidden Lines", "By Discipline", "input"],
    ["Color Scheme Location", "Background", "input"], ["Color Scheme", "<none>", "button"], ["Default Analysis Display S...", "None", "input"], ["Sun Path", "", "off"],
  ]],
  ["Extents", [
    ["Crop View", "", "on"], ["Crop Region Visible", "", "on"], ["Annotation Crop", "", "off"], ["Far Clipping", "Clip without line", "button"],
    ["Far Clip Offset", "1081.1", "input"], ["Scope Box", "None", "input"],
  ]],
  ["Identity Data", [
    ["View Template", "<None>", "button"], ["View Name", "Section 1", "input"], ["Dependency", "Independent", "dim"], ["Title on Sheet", "", "input"],
    ["Referencing Sheet", "", "dim"], ["Referencing Detail", "", "dim"], ["View Kategori", "", "extra"],
  ]],
  ["Phasing", [["Phase Filter", "Show All", "input"], ["Phase", "New Construction", "input"]]],
];

const Property = ({ p: [name, value, kind] }: { p: P }) => {
  const id = name.replace(/\W+/g, "-").toLowerCase();
  return (
    <tr>
      <NameCell scope="row" $dim={kind === "dim"}><label htmlFor={id}>{name}</label></NameCell>
      <ValueCell>
        {kind === "button" ? <ValueButton id={id} type="button">{value}</ValueButton>
          : kind === "on" || kind === "off" ? <Check id={id} type="checkbox" defaultChecked={kind === "on"} />
          : <ValueInput id={id} defaultValue={value} disabled={kind === "dim"} $focus={kind === "focus"} $inset={kind === "inset"} />}
      </ValueCell>
      <ValueCell>{kind === "extra" && <ValueButton type="button" aria-label="Browse" />}</ValueCell>
    </tr>
  );
};

/* ---------- document view ---------- */

const Doc = styled.section`
  display: flex; flex-direction: column; min-width: 0; min-height: 0; background: #fff;
  border-left: 2px solid ${chrome}; border-right: 2px solid ${chrome};
`;
const DocTabs = styled.div`display: flex; height: 20px; background: ${chrome}; flex: none;`;
const DocTab = styled.button<{ $on?: boolean }>`
  ${row} gap: 7px; flex: 0 0 128px; height: 20px; padding: 0 5px; border: 0; text-align: left; white-space: nowrap;
  background: ${(p) => (p.$on ? "#fff" : "none")}; color: ${(p) => (p.$on ? "#111" : "#444")}; font-weight: ${(p) => (p.$on ? 600 : 400)};
  svg:last-child:not(:first-child) { margin-left: auto; }
`;
const TabMenu = styled.button`${bare} margin-left: auto; width: 22px;`;
const DocBody = styled.div`flex: 1; min-height: 0; display: flex;`;
const Canvas = styled.div`flex: 1; min-width: 0; ${row} justify-content: center; overflow: hidden;`;
const Sheet = styled.figure`position: relative; margin: 0; display: flex;`;
const Tooltip = styled.figcaption`
  position: absolute; left: 495px; top: 407px; height: 20px; padding: 0 6px; line-height: 18px; white-space: nowrap; color: #575757;
  background: #fff; border: 1px solid #767676; box-shadow: 3px 3px 2px rgba(0, 0, 0, 0.4);
`;
const VBar = styled.div`
  display: flex; flex-direction: column; align-items: center; justify-content: space-between; width: 18px; padding: 6px 0;
  background: #f0f0f0; border-right: 2px solid #fff; flex: none;
`;
const VThumb = styled.span`width: 16px; height: 17px; background: #cdcdcd;`;
const ViewBar = styled.div`${row} height: 18px; background: #f0f0f0; border-bottom: 2px solid #fff; flex: none; padding-left: 1px;`;
const ScaleButton = styled.button`${bare} width: 76px; padding-left: 8px; color: #111;`;
const Track = styled.div`flex: 1; ${row} justify-content: center; height: 16px;`;
const HThumb = styled.span`width: 17px; height: 15px; background: #cdcdcd;`;

const tags: [number, number, string][] = [
  [865, 562, "Ø16 - 1"], [834, 643, "Ø16 - 4"], [1145, 614, "Ø16 - 1"], [1109, 650, "Ø16 - 2"],
  [842, 926, "Ø10 - 1"], [963, 934, "Ø16 - 7"], [1111, 938, "Ø16 - 17"],
];
const topDots = Array.from({ length: 10 }, (_, i) => 815 + i * 48.300);
const lowDots = Array.from({ length: 10 }, (_, i) => 816 + i * 47.500);

const Drawing = () => (
  <svg width="498" height="734" viewBox="767 229 498 734" role="img" aria-label="Section 1 reinforcement">
    <path d="M979.500 232V711.500H793.500V860.500H1263V711.500H1091.500V232z" fill="#c0c0c0" />
    <g fill="none" stroke="#000">
      <path d="M979.500 232V711.500H793.500V860.500H1263M1263 711.500H1091.500V232" />
      <g fill="#fff">
        <path d="M1263 730.500H812.500V736.500H1263M1263 835.500H812.500V841.500H1263" />
        <path d="M998.500 743.500H817L812.500 748V824L817 828.500H998.500V824.500H819L816.500 822V750L819 747.500H998.500" />
        <path d="M1263 828.500H1044C1018 828.500 998.500 808 998.500 785V288.500H1004.500V785C1004.500 806 1021 822.500 1040 822.500H1263" />
        <path d="M1263 828.500H1110C1086 828.500 1067.500 809 1067.500 787V288.500H1073.500V787C1073.500 806 1090 822.500 1110 822.500H1263" stroke="none" />
        <path d="M1107 828.500C1085 825 1067.500 809 1067.500 787V288.500H1073.500V787C1073.500 806 1090 822.500 1110 822.500H1263M1100 828.500H1263" fill="none" />
      </g>
      <path d="M950 554.500H1001.500M876.500 650V734M1070 620.500H1128.500L1145 605M1151.500 657L1152.500 678 1153.500 740M884.500 826V903M1004.500 832V911M1160.500 838V915" />
    </g>
    {topDots.map((x) => <circle key={x} cx={x} cy={740} r={3} />)}
    {lowDots.map((x) => <circle key={x} cx={x} cy={832} r={3} />)}
    <g fontFamily="Liberation Sans, Arial, sans-serif" fontSize={25} fill="#000">
      {tags.map(([x, y, t]) => <text key={t + x} x={x} y={y}>{t}</text>)}
    </g>
    <rect x={769.500} y={231.500} width={493} height={729} fill="none" stroke="#7f9fdc" strokeWidth={3} />
    <rect x={769.500} y={231.500} width={493} height={729} fill="none" stroke="#00206a" />
  </svg>
);

/* ---------- project browser ---------- */

const Tree = styled.ul`list-style: none; margin: 0; padding: 0; flex: 1; min-height: 0; overflow: hidden; background: #fff; color: #111;`;
const Item = styled.li`${row} height: 18px; white-space: nowrap;`;
const ItemText = styled.span<{ $gap?: boolean; $sel?: boolean; $bold?: boolean }>`
  line-height: 18px; margin-left: ${(p) => (p.$gap ? (p.$sel ? 3 : 6) : 0)}px;
  ${(p) => p.$sel && css`background: #dedede; padding: 0 3px;`}
  font-weight: ${(p) => (p.$bold ? 700 : 400)};
`;
const guide = (w: number, d: string, box?: "+" | "-") => (
  <svg width={w} height={18} viewBox={`0 0 ${w} 18`} fill="none" aria-hidden="true">
    <path d={d} stroke="#8a8a8a" strokeDasharray="1 1" />
    {box && <><rect x={6.500} y={5.500} width={8} height={8} rx={1} fill="#fff" stroke="#919191" /><path d={box === "+" ? "M8 9.500h5M10.500 7v5" : "M8 9.500h5"} stroke="#2b4a9b" /></>}
  </svg>
);
type N = { d: number; t: string; e?: "+" | "-"; icon?: string; bold?: boolean; sel?: boolean; end?: boolean; first?: boolean };
const kids = (end: string, s: string): N[] => s.split(",").map((t) => ({ d: 1, t, e: "+", end: t === end }));
const tree: N[] = [
  { d: 0, t: "Views (all)", e: "-", icon: "views", sel: true, first: true },
  { d: 1, t: "Structural Plans", e: "+" },
  { d: 1, t: "3D Views", e: "-" },
  { d: 2, t: "{3D}", icon: "sheetview", end: true },
  { d: 1, t: "Sections (Section 1)", e: "-", end: true },
  { d: 2, t: "Section 1", icon: "sheetview", bold: true, end: true },
  { d: 0, t: "Legends", icon: "legends" },
  { d: 0, t: "Schedules/Quantities (all)", icon: "schedules" },
  { d: 0, t: "Sheets (all)", icon: "sheets" },
  { d: 0, t: "Families", e: "-", icon: "families" },
  { d: 1, t: "Annotation Symbols", e: "-" },
  { d: 2, t: "Automatic Up/Down Direction", e: "+" },
  { d: 2, t: "Fixed Up Direction", e: "+" },
  { d: 2, t: "Rebar Tag", e: "+", end: true },
  ...kids("Walls", "Cable Trays,Ceilings,Conduits,Curtain Panels,Curtain Systems,Curtain Wall Mullions,Detail Items,Duct Systems,Ducts,Flex Ducts,Flex Pipes,Floors,Pipes,Piping Systems,Profiles,Railings,Ramps,Roofs,Site,Stairs,Structural Area Reinforcement,Structural Beam Systems,Structural Foundations,Structural Rebar,Walls"),
  { d: 0, t: "Groups", e: "+", icon: "groups" },
  { d: 0, t: "Revit Links", icon: "links", end: true },
];
const Node = ({ n, inLastSection }: { n: N; inLastSection: boolean }) => (
  <Item>
    {n.d > 0 && guide(20, "M10.500 0V18")}
    {n.d > 1 && guide(20, inLastSection ? "" : "M10.500 0V18")}
    {guide(n.icon ? 22 : 28, `M10.500 ${n.first ? 9 : 0}V${n.end ? 9 : 18}M11 9.500H${n.icon ? 21 : 25}`, n.e)}
    {n.icon && treeIcons[n.icon]}
    <ItemText $gap={!!n.icon} $sel={n.sel} $bold={n.bold}>{n.t}</ItemText>
  </Item>
);
const HScroll = styled.div`
  ${row} height: 17px; padding: 0 0 1px 5px; margin-bottom: 1px; background: #f0f0f0; flex: none;
`;
const BrowserTrack = styled.div`flex: 1; padding: 0 29px 0 5px;`;
const BrowserThumb = styled.div`height: 15px; background: #cdcdcd;`;

/* ---------- status bar ---------- */

const Status = styled.footer`
  display: grid; grid-template-columns: 899px 1fr auto; align-items: center; height: 24px; background: ${chrome}; flex: none; color: #111; padding-right: 68px;
`;
const StatusText = styled.span`padding-left: 4px;`;
const StatusMid = styled.div`${row}`;
const StatusRight = styled.div`${row} gap: 2px;`;
const Count = styled.span`color: #222;`;
const Funnel = <G w={18} h={16}><path d="M1 2h16l-6 6v6l-4 2V8z" fill="#aeb4bc" stroke="#6a717a" /></G>;

export default function App() {
  return (
    <Shell>
      <Global />
      <TitleBar>
        <Tools>
          {quickItems.map((q, i) =>
            typeof q === "number" ? <Spacer key={i} $w={q} />
              : q === "|" ? <Divider key={i} />
              : q === "v" ? <IconButton key={i} $w={12} type="button" aria-label="More"><Caret /></IconButton>
              : <IconButton key={i} type="button" aria-label={q} $on={q === "thin"}>{quick[q]}</IconButton>
          )}
          <IconButton $w={12} type="button" aria-label="Customize toolbar"><G w={9} h={9}><path d="M1 1h7" strokeWidth={1.500} /><path d="M0 4h9L4.500 8z" fill={ink} stroke="none" /></G></IconButton>
        </Tools>
        <Title>Autodesk Revit 2023.1 - rebar_tag_problem_shared.rvt - Section: Section 1</Title>
        <Tools>
          <IconButton $w={12} type="button" aria-label="Collapse search"><G w={5} h={9}><path d="M5 0v9L0 4.500z" fill={ink} stroke="none" /></G></IconButton>
          <IconButton type="button" aria-label="Search"><Binoculars /></IconButton>
          <User type="button">
            <G><path d="M0 15.500c0-3 2-4 5-5C3 8 3 1 8 1s5 7 3 9.500c3 1 5 2 5 5z" fill="#5b8def" stroke="#1d3f94" /></G>
            <span>jasoncolcombe</span><Caret />
          </User>
          <Spacer $w={7} />
          <IconButton type="button" aria-label="App store"><G><path d="M0 1h3l2 9h9M4 3h11l-2 5H5" strokeWidth={1.500} /><circle cx={6} cy={13.500} r={1.500} /><circle cx={12} cy={13.500} r={1.500} /></G></IconButton>
          <Divider /><Spacer $w={2} />
          <IconButton type="button" aria-label="Help"><G><circle cx={8} cy={8} r={7.300} fill="#fff" /><T x={8} y={12.500} s={13} c="#1b56b8">?</T></G></IconButton>
          <IconButton $w={12} type="button" aria-label="Help menu"><Caret /></IconButton>
          <Spacer $w={54} />
          <IconButton type="button" aria-label="Minimize"><G w={10} h={10} color="#222"><path d="M1 8.500h8" strokeWidth={2} /></G></IconButton>
          <IconButton type="button" aria-label="Restore"><G w={12} h={12} color="#222"><path d="M3.500 4V1.500h8v6H9M.5 4.500h8v6h-8z" /><path d="M.5 5h8M3.500 2h8" strokeWidth={2} /></G></IconButton>
          <IconButton type="button" aria-label="Close"><Cross s={12} /></IconButton>
        </Tools>
      </TitleBar>
      <Tabs>
        <Tab type="button" $kind="file">File</Tab>
        {coreTabs.map((t) => <Tab key={t} type="button" $kind={t === "Annotate" ? "active" : undefined}>{t}</Tab>)}
        {moreTabs.map((t) => <Tab key={t} type="button" $kind="wide">{t}</Tab>)}
        <Spacer $w={13} />
        <IconButton $w={32} type="button" aria-label="Ribbon display"><G w={24} h={9}><rect x={0.500} y={0.500} width={14} height={8} rx={2} fill="#eee" /><path d="M5 6l2.500-3L10 6z" fill="#222" stroke="none" /><path d="M18 3h6l-3 3.500z" fill="#222" stroke="none" /></G></IconButton>
      </Tabs>
      <Ribbon>
        <Group $w={57}>
          <GroupBody><BigButton $w={44} $on type="button"><BigArt>{big.modify}</BigArt><span>Modify</span></BigButton></GroupBody>
          <GroupTitle>Select <BigCaret /></GroupTitle>
        </Group>
        <Group $w={432}>
          <GroupBody>
            <Big items={[["aligned", "Aligned", 50], ["linear", "Linear", 36], ["angular", "Angular", 50], ["radial", "Radial", 38], ["diameter", "Diameter", 54], ["arc", "Arc|Length", 43], ["elevation", "Spot|Elevation", 56], ["coordinate", "Spot|Coordinate", 64], ["slope", "Spot|Slope", 40]]} />
          </GroupBody>
          <GroupTitle>Dimension <BigCaret /></GroupTitle>
        </Group>
        <Group $w={349}>
          <GroupBody $pad={4}>
            <Big items={[["detailline", "Detail|Line", 36], ["region", "Region", 60, "menu"], ["component", "Component", 86, "menu"], ["cloud", "Revision|Cloud", 52], ["group", "Detail|Group", 50, "beside"], ["insulation", "Insulation", 58]]} />
          </GroupBody>
          <GroupTitle>Detail</GroupTitle>
        </Group>
        <Group $w={139}>
          <GroupBody $pad={4}>
            <Big items={[["text", "Text", 38], ["spelling", "Check|Spelling", 46], ["find", "Find/|Replace", 50]]} />
          </GroupBody>
          <GroupTitle>
            <Spacer $w={46} />Text
            <Launcher type="button" aria-label="Text types"><G w={6} h={6}><path d="M0 0l4 4M5 1v4H1" /></G></Launcher>
          </GroupTitle>
        </Group>
        <Group $w={504}>
          <GroupBody>
            <Big items={[["tagby", "Tag by|Category", 58], ["tagall", "Tag|All", 34]]} />
            <Spacer $w={7} />
            <Smalls w={131} items={[["beamann", "Beam  Annotations", "off"], ["multicat", "Multi- Category"], ["material", "Material  Tag"]]} />
            <Smalls w={86} items={[["areatag", "Area  Tag", "off"], ["roomtag", "Room  Tag"], ["spacetag", "Space  Tag"]]} />
            <Smalls w={110} items={[["viewref", "View  Reference"], ["tread", "Tread  Number"], ["multirebar", "Multi- Rebar ", "menu"]]} />
            <Rule />
            <Big items={[["keynote", "Keynote", 70, "menu"]]} />
          </GroupBody>
          <GroupTitle>Tag <BigCaret /></GroupTitle>
        </Group>
        <Group $w={128}>
          <GroupBody $pad={7}>
            <Smalls w={120} items={[["duct", "Duct  Legend", "off"], ["pipe", "Pipe  Legend", "off"], ["colorfill", "Color Fill  Legend"]]} />
          </GroupBody>
          <GroupTitle>Color Fill</GroupTitle>
        </Group>
        <Group $w={224} $last>
          <GroupBody>
            <Big items={[["symbol", "Symbol", 50]]} />
            <Spacer $w={4} />
            <Smalls w={110} items={[["span", "Span  Direction", "off"], ["beam", "Beam"], ["stair", "Stair  Path", "off"]]} />
            <Smalls w={60} items={[["area", "Area"], ["path", "Path"], ["fabric", "Fabric"]]} />
          </GroupBody>
          <GroupTitle>Symbol</GroupTitle>
        </Group>
      </Ribbon>
      <OptionsBar />
      <Work>
        <Panel>
          <PanelHead><PanelName>Properties</PanelName><Close type="button" aria-label="Close properties"><Cross /></Close></PanelHead>
          <TypeCard>
            <Preview><SectionIcon s={34} /></Preview>
            <TypeName>Section<br />Section 1</TypeName>
            <Caret />
          </TypeCard>
          <TypeRow>
            <Combo $w={238} $h={23}><Select aria-label="Type filter"><option>Section: Section 1</option></Select><Thin /></Combo>
            <EditType type="button"><G><path d="M1 4l2-2h4v5H1zM9 3l1-1h4l-1 5H9zM1 9h6v5H1z" fill="#f4f4f4" /><path d="M8 7h7v8H8z" fill="#fff" /><path d="M9.500 9h4" stroke={blue} strokeWidth={2} /><path d="M10 12h1M12 12h1" /></G>Edit Type</EditType>
          </TypeRow>
          <Scroll>
            <Table>
              <colgroup><NameCol /><col /><EdgeCol /></colgroup>
              {props.map(([name, rows]) => (
                <tbody key={name}>
                  <tr><SectionCell colSpan={3} scope="rowgroup"><SectionBar>{name}<G w={7} h={9} color="#111"><path d="M1 4l2.500-3L6 4M1 8l2.500-3L6 8" strokeWidth={1.400} /></G></SectionBar></SectionCell></tr>
                  {rows.map((p) => <Property key={p[0]} p={p} />)}
                </tbody>
              ))}
            </Table>
          </Scroll>
          <Footer><Help href="#help">Properties help</Help><Apply type="button" disabled>Apply</Apply></Footer>
        </Panel>
        <Doc>
          <DocTabs>
            <DocTab type="button"><PlanIcon c="#7c8087" />Level 2</DocTab>
            <DocTab type="button"><SectionIcon c="#7c8087" />Section 1</DocTab>
            <DocTab type="button"><House c="#7c8087" />{"{3D}"}</DocTab>
            <DocTab type="button"><PlanIcon c="#7c8087" />Level 1</DocTab>
            <DocTab type="button"><House c="#7c8087" />{"{3D}"}</DocTab>
            <DocTab type="button"><SectionIcon c="#7c8087" />Reinf - Sketch</DocTab>
            <DocTab type="button" $on><SectionIcon />Section 1<Cross /></DocTab>
            <TabMenu type="button" aria-label="Open views"><G w={9} h={9}><path d="M0 1h9" strokeWidth={1.500} /><path d="M0 4h9L4.500 8z" fill={ink} stroke="none" /></G></TabMenu>
          </DocTabs>
          <DocBody>
            <Canvas><Sheet><Drawing /><Tooltip>Views : Section : Section 1</Tooltip></Sheet></Canvas>
            <VBar><Chevron turn={180} /><VThumb /><Chevron turn={0} /></VBar>
          </DocBody>
          <ViewBar>
            <ScaleButton type="button">1 : 20</ScaleButton>
            {viewIcons.map(([name, icon]) => <IconButton key={name} $w={21} type="button" aria-label={name}>{icon}</IconButton>)}
            <Spacer $w={6} />
            <Chevron turn={90} />
            <Track><HThumb /></Track>
            <Chevron turn={-90} />
            <Spacer $w={10} />
            <G w={9} h={9} color="#bbb"><path d="M6 1h2M3 4h2M6 4h2M0 7h2M3 7h2M6 7h2" strokeWidth={2} /></G>
            <Spacer $w={4} />
          </ViewBar>
        </Doc>
        <Panel>
          <PanelHead $pad={4}><PanelName>Project Browser - rebar_tag_pro...</PanelName><Close $w={12} type="button" aria-label="Close browser"><Cross /></Close></PanelHead>
          <Tree>{tree.map((n, i) => <Node key={i} n={n} inLastSection={i === 5} />)}</Tree>
          <HScroll><Chevron turn={90} /><BrowserTrack><BrowserThumb /></BrowserTrack><Chevron turn={-90} /></HScroll>
        </Panel>
      </Work>
      <Status>
        <StatusText>Views : Section : Section 1</StatusText>
        <StatusMid>
          <G><path d="M6 3l4-2 4 2v5l-4 2-4-2z" fill="#b9dfa5" stroke="#2e6b1f" /><path d="M1 8l4-2 4 2v5l-4 2-4-2zM5 9v5" fill="#a9d9f7" stroke={blue} /><path d="M13 8v7M11 6v3h4V6" /></G>
          <Spacer $w={8} />
          <Combo $w={204} $h={18} $plain><Select aria-label="Active workset"><option></option></Select><Thin /></Combo>
          <Spacer $w={8} />
          <G color="#999"><path d="M5 1h9v4H5zM9 5l-2 4" fill="#ddd" /><path d="M1 15l5-8 5 8z" fill="#999" /></G>
          <Spacer $w={4} /><Count>:0</Count><Spacer $w={26} />
          <G><path d="M.5 1.500h15v13H.5z" fill="#f4f4f8" strokeWidth={1.500} /><path d="M1 3h14" strokeWidth={2} /><path d="M3 6h2v2H3zM7 7h6M7 10h6M5 12.500h8" /></G>
          <Spacer $w={10} />
          <G color="#8d8d8d"><path d="M2 1h13v14H2z" fill="#999" /><path d="M0 9h5V6l4 4.500L5 15v-3H0z" fill="#ccc" /></G>
          <Spacer $w={8} />
          <Combo $w={204} $h={18} $plain><Select $dim aria-label="Design option"><option>Main Model</option></Select><Thin /></Combo>
        </StatusMid>
        <StatusRight>
          {statusIcons.map(([name, icon]) => <IconButton key={name} type="button" aria-label={name}>{icon}</IconButton>)}
          {Funnel}<Count>:0</Count>
        </StatusRight>
      </Status>
    </Shell>
  );
}
